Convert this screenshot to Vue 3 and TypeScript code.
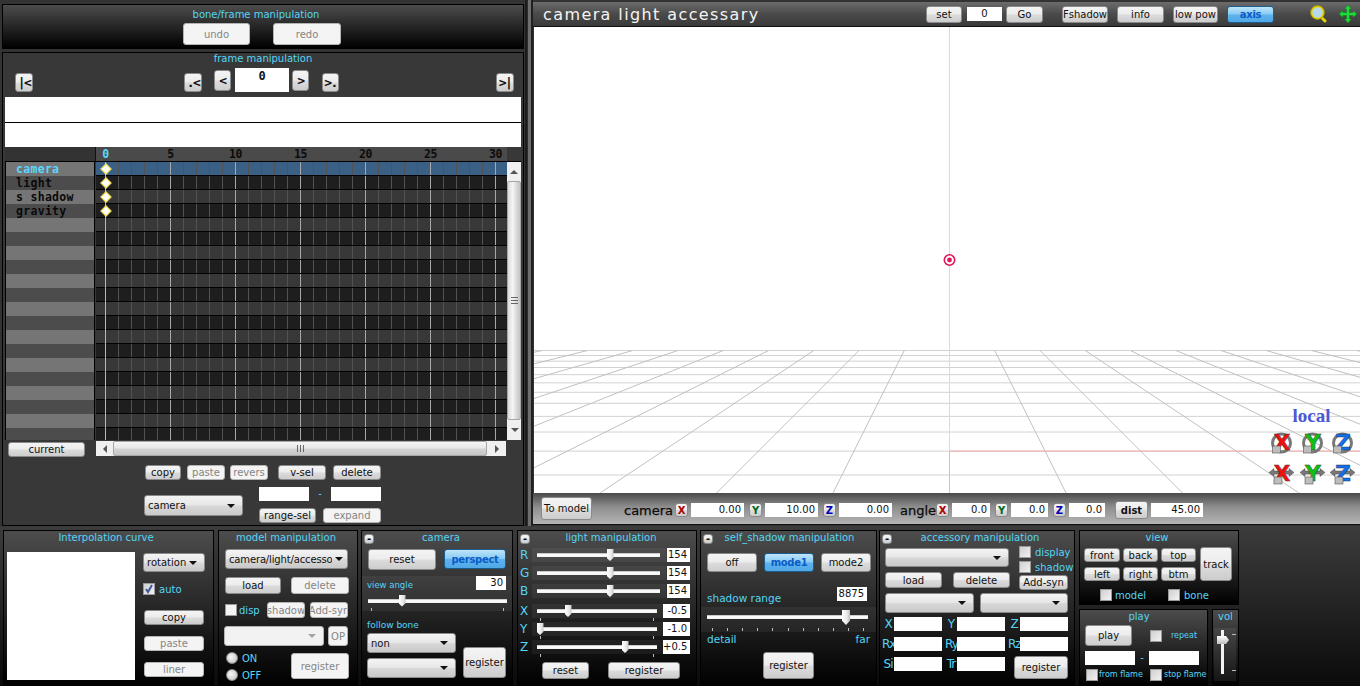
<script setup lang="ts">
const rowCount = 20
const rows = Array.from({ length: rowCount }, (_, i) => i)
const labels = ['camera', 'light', 's shadow', 'gravity']
const headNums = [0, 5, 10, 15, 20, 25, 30]

const f = 860
const cx = 415.5
const cy = 233
const horizon = [-5, 0, 5, 10, 15, 20, 25, 30, 35, 40, 45, 50].map((z) => cy + (f * 10) / (z + 45))
const depth = Array.from({ length: 21 }, (_, i) => -50 + i * 5)
  .filter((x) => x !== 0)
  .map((x) => ({
    x1: cx + (f * x) / 95,
    y1: cy + (f * 10) / 95,
    x2: cx + (f * x) / 20,
    y2: cy + (f * 10) / 20,
  }))
const floorY = cy + (f * 10) / 45

interface Axis { letter: string; color: string }
const axes: Axis[] = [
  { letter: 'X', color: '#f01010' },
  { letter: 'Y', color: '#10c010' },
  { letter: 'Z', color: '#1070f0' },
]

interface LightRow { id: string; value: string; thumb: number }
const lightTop: LightRow[] = [
  { id: 'R', value: '154', thumb: 73 },
  { id: 'G', value: '154', thumb: 73 },
  { id: 'B', value: '154', thumb: 73 },
]
const lightBottom: LightRow[] = [
  { id: 'X', value: '-0.5', thumb: 31 },
  { id: 'Y', value: '-1.0', thumb: 3 },
  { id: 'Z', value: '+0.5', thumb: 88 },
]
const shadowTicks = Array.from({ length: 11 }, (_, i) => 5 + i * 15.1)
const accRows = [
  ['X', 'Y', 'Z'],
  ['Rx', 'Ry', 'Rz'],
]
const camValues = [
  { axis: 'X', cls: 'ax-x', w: 'w53', v: '0.00' },
  { axis: 'Y', cls: 'ax-y', w: 'w53', v: '10.00' },
  { axis: 'Z', cls: 'ax-z', w: 'w53', v: '0.00' },
]
const angleValues = [
  { axis: 'X', cls: 'ax-x', w: 'w38', v: '0.0' },
  { axis: 'Y', cls: 'ax-y', w: 'w37', v: '0.0' },
  { axis: 'Z', cls: 'ax-z', w: 'w36', v: '0.0' },
]
function px(n: number): string {
  return n + 'px'
}
</script>

<template>
  <div class="app">
    <div class="top">
      <div class="left">
        <section class="panel grad p-undo">
          <div class="title pt3 pr14">bone/frame manipulation</div>
          <div class="r center g23 mt1 pr2">
            <div class="btn dis w67 h22">undo</div>
            <div class="btn dis w68 h22">redo</div>
          </div>
        </section>
        <section class="panel flat p-frame">
          <div class="title h11">frame manipulation</div>
          <div class="r mt4 h24">
            <div class="btn nav ml12 mt5 w18 h19">|&lt;</div>
            <div class="btn nav ml151 mt5 w18 h19">.&lt;</div>
            <div class="btn nav ml12 mt2 w17 h21">&lt;</div>
            <div class="field frame-no ml4 w54 h24">0</div>
            <div class="btn nav ml3 mt2 w17 h21">&gt;</div>
            <div class="btn nav ml13 mt5 w17 h19">&gt;.</div>
            <div class="btn nav ml157 mt5 w18 h19">&gt;|</div>
          </div>
          <div class="strips ml2 mt5">
            <div class="strip h25"></div>
            <div class="strip h24"></div>
          </div>
          <div class="timeline ml2">
            <div class="tl-head">
              <div class="tl-corner"></div>
              <div class="tl-nums">
                <span v-for="n in headNums" :key="n" class="tl-num" :class="{ cur: n === 0 }">{{ n }}</span>
              </div>
              <div class="tl-end"></div>
            </div>
            <div class="tl-body">
              <div class="tl-labels">
                <div v-for="i in rows" :key="i" class="tl-label" :class="{ odd: i % 2 === 0, cur: i === 0 }">{{ labels[i] }}</div>
              </div>
              <div class="tl-grid">
                <div v-for="i in rows" :key="i" class="tl-row" :class="{ even: i % 2 === 1, sel: i === 0 }">
                  <i v-if="i < 4" class="key"></i>
                </div>
                <div class="playhead"></div>
              </div>
              <div class="vscroll">
                <div class="sb-arrow"><i class="tri up"></i></div>
                <div class="vthumb"><i class="grip-v"></i></div>
                <div class="sb-arrow grow"><i class="tri down small"></i></div>
              </div>
            </div>
            <div class="tl-foot">
              <div class="btn w77 h15 ml3 mt2">current</div>
              <div class="hscroll ml11 mt1">
                <div class="sb-arrow hz w17"><i class="tri t-l"></i></div>
                <div class="hthumb"><i class="grip-h"></i></div>
                <div class="sb-arrow hz grow"><i class="tri t-r"></i></div>
              </div>
            </div>
          </div>
          <div class="r mt8 ml142">
            <div class="btn w36 h15">copy</div>
            <div class="btn dis ml6 w38 h15">paste</div>
            <div class="btn dis ml5 w38 h15">revers</div>
            <div class="btn ml10 w48 h15">v-sel</div>
            <div class="btn ml7 w48 h15">delete</div>
          </div>
          <div class="r mt7 ml141">
            <div class="select mt8 w99 h21"><span>camera</span><i class="tri down"></i></div>
            <div class="ml16">
              <div class="r">
                <div class="field w50 h14"></div>
                <div class="dash w22">-</div>
                <div class="field w50 h14"></div>
              </div>
              <div class="r mt7">
                <div class="btn w57 h15">range-sel</div>
                <div class="btn dis ml7 w58 h15">expand</div>
              </div>
            </div>
          </div>
        </section>
      </div>

      <div class="divider"></div>

      <div class="right">
        <div class="head">
          <div class="head-title">camera light accessary</div>
          <div class="btn w36 h17">set</div>
          <div class="field ctr ml5 w35 h14">0</div>
          <div class="btn ml4 w37 h17">Go</div>
          <div class="btn ml19 w46 h17">Fshadow</div>
          <div class="btn ml9 w47 h17">info</div>
          <div class="btn ml9 w45 h17">low pow</div>
          <div class="btn act ml9 w47 h17">axis</div>
          <svg class="ml36" width="17" height="18" viewBox="0 0 17 18">
            <path d="M11 12l4 4" stroke="#e8d400" stroke-width="3" stroke-linecap="round" />
            <circle cx="7.5" cy="7.5" r="6.2" fill="#b5d8ee" stroke="#e8d400" stroke-width="2" />
            <circle cx="7.5" cy="7.5" r="6.9" fill="none" stroke="#6a6200" stroke-width=".5" />
          </svg>
          <svg class="ml12" width="18" height="18" viewBox="0 0 18 18">
            <path d="M9 0l3.5 4H10.5v3.5H14V5.500L18 9l-4 3.500v-2H10.500V14h2L9 18l-3.500-4h2v-3.500H4v2L0 9l4-3.500v2h3.500V4h-2z" fill="#22d83a" stroke="#0a7a1a" stroke-width=".5" />
          </svg>
        </div>
        <div class="viewport">
          <svg class="scene" width="826" height="466" viewBox="0 0 826 466">
            <line v-for="(y, i) in horizon" :key="'h' + i" x1="0" :y1="y" x2="826" :y2="y" stroke="#d2d2d2" stroke-width="1" />
            <line v-for="(d, i) in depth" :key="'d' + i" :x1="d.x1" :y1="d.y1" :x2="d.x2" :y2="d.y2" stroke="#c0c0c0" stroke-width="1" />
            <line :x1="cx" y1="0" :x2="cx" :y2="floorY" stroke="#c6e8c6" />
            <line :x1="cx" :y1="floorY" x2="826" :y2="floorY" stroke="#f2aaaa" />
            <line :x1="cx" :y1="floorY" :x2="cx" y2="466" stroke="#c0c0f4" />
            <circle :cx="cx" :cy="cy" r="5.2" fill="#fff" stroke="#e0185c" stroke-width="1.6" />
            <circle :cx="cx" :cy="cy" r="2.4" fill="#e0185c" />
          </svg>
          <div class="gizmo">
            <div class="local">local</div>
            <div class="giz-grid">
              <svg v-for="a in axes" :key="'r' + a.letter" width="25" height="27" viewBox="0 -4 25 27">
                <circle cx="12.5" cy="10" r="9" fill="none" stroke="#787878" stroke-width="3" />
                <text x="13" y="17" text-anchor="middle" class="giz-text" :fill="a.color" stroke="#333" stroke-width=".4">{{ a.letter }}</text>
                <rect x="3.5" y="13" width="8" height="7" fill="#bdbdbd" stroke="#555" stroke-width=".6" />
              </svg>
            </div>
            <div class="giz-grid lower">
              <svg v-for="a in axes" :key="'m' + a.letter" width="25" height="27" viewBox="0 -4 25 27">
                <path d="M0 8.500l5-4v2.500h15V4.500l5 4-5 4V10H5v2.500z" fill="#787878" stroke="#333" stroke-width=".4" />
                <text x="13" y="17" text-anchor="middle" class="giz-text" :fill="a.color" stroke="#333" stroke-width=".4">{{ a.letter }}</text>
                <rect x="5" y="13" width="8" height="7" fill="#bdbdbd" stroke="#555" stroke-width=".6" />
              </svg>
            </div>
          </div>
        </div>
        <div class="cambar">
          <div class="btn tomodel ml8 w51 h23">To model</div>
          <span class="barlabel cam">camera</span>
          <template v-for="c in camValues" :key="c.axis">
            <div class="btn axbtn w13 h14" :class="c.cls">{{ c.axis }}</div>
            <div class="field num ml3 mr5 h14" :class="c.w">{{ c.v }}</div>
          </template>
          <span class="barlabel ang">angle</span>
          <template v-for="c in angleValues" :key="'a' + c.axis">
            <div class="btn axbtn w13 h14" :class="c.cls">{{ c.axis }}</div>
            <div class="field num ml3 mr5 h14" :class="c.w">{{ c.v }}</div>
          </template>
          <div class="btn distbtn ml5 w33 h18">dist</div>
          <div class="field num ml3 w52 h14">45.00</div>
        </div>
      </div>
    </div>

    <div class="bottom">
      <section class="panel grad p-ic">
        <div class="title pr5">Interpolation curve</div>
        <div class="r">
          <div class="curve"></div>
          <div class="ml8 mt8">
            <div class="select w62 h19"><span>rotation</span><i class="tri down"></i></div>
            <div class="r ac mt11 h12"><i class="check on"><svg width="10" height="10" viewBox="0 0 10 10"><path d="M2 5l2 3 4-7" fill="none" stroke="#3c5a9c" stroke-width="2" /></svg></i><span class="lab ml4">auto</span></div>
            <div class="btn ml1 mt15 w60 h15">copy</div>
            <div class="btn dis ml1 mt11 w60 h15">paste</div>
            <div class="btn dis ml1 mt11 w60 h15">liner</div>
          </div>
        </div>
      </section>

      <section class="panel grad p-model gapl4">
        <div class="title pr4">model manipulation</div>
        <div class="select ml6 mt4 w123 h20 tight"><span>camera/light/accesso</span><i class="tri down"></i></div>
        <div class="r mt8 ml6">
          <div class="btn w56 h17">load</div>
          <div class="btn dis ml10 w58 h17">delete</div>
        </div>
        <div class="r ac mt8 ml6 h16">
          <i class="check white"></i><span class="lab ml2 w28">disp</span>
          <div class="btn dis w38 h16">shadow</div>
          <div class="btn dis ml5 w38 h16">Add-syn</div>
        </div>
        <div class="r mt8 ml5">
          <div class="select sel-dis w100 h20"><span></span><i class="tri down pale"></i></div>
          <div class="btn dis ml4 w20 h20">OP</div>
        </div>
        <div class="r ml7">
          <div class="w65 mt6">
            <div class="r ac h12"><i class="radio"></i><span class="lab ml4">ON</span></div>
            <div class="r ac h12 mt5"><i class="radio"></i><span class="lab ml4">OFF</span></div>
          </div>
          <div class="btn dis mt7 w58 h26">register</div>
        </div>
      </section>

      <section class="panel grad p-cam gapl3">
        <div class="title has-min pl8"><div class="btn mini">-</div>camera</div>
        <div class="r mt4 ml6">
          <div class="btn w68 h21">reset</div>
          <div class="btn act ml8 w62 h20">perspect</div>
        </div>
        <div class="band mt6">
          <div class="r ac ml5 h14">
            <span class="lab small-lab mt4 w109">view angle</span>
            <div class="field num w30 h14">30</div>
          </div>
          <div class="slider ml6 w139 h21">
            <i class="track"></i>
            <i class="thumb" :style="{ left: px(34) }"></i>
            <i class="tick tk3"></i>
            <i class="tick tk135"></i>
          </div>
        </div>
        <div class="r ml5 mt6">
          <div>
            <div class="lab follow h14">follow bone</div>
            <div class="select mt2 w89 h20"><span>non</span><i class="tri down"></i></div>
            <div class="select mt5 w89 h20"><span></span><i class="tri down"></i></div>
          </div>
          <div class="btn ml7 mt30 w43 h31">register</div>
        </div>
      </section>

      <section class="panel grad p-light gapl4">
        <div class="title has-min pl8"><div class="btn mini">-</div>light manipulation</div>
        <div class="lt-top">
          <div v-for="l in lightTop" :key="l.id" class="lt-row">
            <span class="lt-id">{{ l.id }}</span>
            <div class="slider ml4 w123 h14"><i class="track"></i><i class="thumb" :style="{ left: px(l.thumb) }"></i></div>
            <div class="field num ml7 w23 h14">{{ l.value }}</div>
          </div>
        </div>
        <div class="lt-bot">
          <div v-for="l in lightBottom" :key="l.id" class="lt-row">
            <span class="lt-id">{{ l.id }}</span>
            <div class="slider ml4 w120 h14">
              <i class="track"></i><i class="thumb" :style="{ left: px(l.thumb) }"></i>
              <i class="tick tk3"></i><i class="tick tk116"></i>
            </div>
            <div class="field num ml6 w27 h14">{{ l.value }}</div>
          </div>
        </div>
        <div class="r mt8 ml24">
          <div class="btn w47 h17">reset</div>
          <div class="btn ml19 w72 h17">register</div>
        </div>
      </section>

      <section class="panel grad p-shadow gapl3">
        <div class="title has-min pl2"><div class="btn mini">-</div>self_shadow manipulation</div>
        <div class="r mt8 ml6">
          <div class="btn w50 h19">off</div>
          <div class="btn act ml7 w50 h19">mode1</div>
          <div class="btn ml7 w50 h19">mode2</div>
        </div>
        <div class="r ac mt15 ml6 h14">
          <span class="lab big mt8 w130">shadow range</span>
          <div class="field num w30 h14">8875</div>
        </div>
        <div class="band band-sh mt6">
          <div class="slider ml6 w161 h20">
            <i class="track"></i>
            <i class="thumb lg" :style="{ left: px(139) }"></i>
            <i v-for="(t, i) in shadowTicks" :key="i" class="tick tick-sh" :style="{ left: px(t) }"></i>
          </div>
        </div>
        <div class="r ac between ml6 mr6 h14">
          <span class="lab big">detail</span><span class="lab big">far</span>
        </div>
        <div class="btn ml62 mt6 w51 h27">register</div>
      </section>

      <section class="panel grad p-acc gapl2">
        <div class="title has-min pl6"><div class="btn mini">-</div>accessory manipulation</div>
        <div class="r">
          <div class="ml5 mt3">
            <div class="select w124 h19"><span></span><i class="tri down"></i></div>
            <div class="r mt5">
              <div class="btn w57 h16">load</div>
              <div class="btn ml11 w57 h16">delete</div>
            </div>
          </div>
          <div class="ml9 mt1">
            <div class="r ac h12"><i class="check"></i><span class="lab ml4">display</span></div>
            <div class="r ac h12 mt3"><i class="check"></i><span class="lab ml4">shadow</span></div>
            <div class="btn mt2 w49 h15">Add-syn</div>
          </div>
        </div>
        <div class="r mt3 ml5">
          <div class="select w89 h20"><span></span><i class="tri down"></i></div>
          <div class="select ml6 w88 h20"><span></span><i class="tri down"></i></div>
        </div>
        <div v-for="(row, i) in accRows" :key="i" class="r ac h14 ml2" :class="i === 0 ? 'mt4' : 'mt6'">
          <template v-for="(c, j) in row" :key="c">
            <span class="acc-id" :class="{ ml3: j > 0 }">{{ c }}</span>
            <div class="field w48 h14"></div>
          </template>
        </div>
        <div class="r ml2 mt6 h14">
          <span class="acc-id">Si</span>
          <div class="field w48 h14"></div>
          <span class="acc-id ml3">Tr</span>
          <div class="field w48 h14"></div>
          <div class="btn reg-acc ml9 w54 h23">register</div>
        </div>
      </section>

      <div class="stack gapl4">
        <section class="panel grad p-view">
          <div class="title pr4">view</div>
          <div class="r ml4">
            <div class="mt3">
              <div class="r g3">
                <div class="btn w36 h14">front</div>
                <div class="btn w35 h14">back</div>
                <div class="btn w35 h14">top</div>
              </div>
              <div class="r g3 mt5">
                <div class="btn w36 h14">left</div>
                <div class="btn w35 h14">right</div>
                <div class="btn w35 h14">btm</div>
              </div>
            </div>
            <div class="btn ml4 mt2 w32 h34">track</div>
          </div>
          <div class="r ac ml20 mt8 h12">
            <div class="r ac w68"><i class="check"></i><span class="lab ml3">model</span></div>
            <div class="r ac"><i class="check"></i><span class="lab ml4">bone</span></div>
          </div>
        </section>
        <div class="r mt4">
          <section class="panel grad p-play">
            <div class="title pr9">play</div>
            <div class="r ml5 mt1">
              <div class="btn w47 h21">play</div>
              <div class="r ac ml18 h21"><i class="check"></i><span class="lab tiny ml9">repeat</span></div>
            </div>
            <div class="r ml5 mt5">
              <div class="field w50 h14"></div>
              <div class="dash w14">-</div>
              <div class="field w50 h14"></div>
            </div>
            <div class="r ac ml6 mt3 h13">
              <div class="r ac w64"><i class="check"></i><span class="lab tiny ml1">from flame</span></div>
              <div class="r ac"><i class="check"></i><span class="lab tiny ml2">stop flame</span></div>
            </div>
          </section>
          <section class="panel grad p-vol ml4">
            <div class="title">vol</div>
            <div class="vol-band">
              <i class="vol-track"></i>
              <i class="vol-thumb"></i>
              <i class="vol-tick t1"></i>
              <i class="vol-tick t2"></i>
            </div>
          </section>
        </div>
      </div>
    </div>
  </div>
</template>

<style>
html, body { margin: 0; padding: 0; background: #222; overflow: hidden; }
</style>

<style scoped>
.app { width: 1360px; height: 686px; display: flex; flex-direction: column; overflow: hidden; font-family: "DejaVu Sans", sans-serif; font-size: 10px; color: #111; background: #333; }
.top { height: 526px; display: flex; }
.left { width: 525px; padding: 4px 1px 0 2px; box-sizing: border-box; }
.divider { width: 8px; background: linear-gradient(90deg, #1c1c1c 0 2px, #2c2c2c 2px 3px, #6e6e6e 3px 6px, #202020 6px 8px); }
.right { width: 827px; display: flex; flex-direction: column; background: #333; }

.panel { box-sizing: border-box; border: 1px solid #000; overflow: hidden; }
.grad { background: linear-gradient(#4c4c4c, #000); }
.flat { background: #383838; }
.p-undo { height: 45px; }
.p-frame { height: 474px; margin-top: 3px; }

.title { color: #55d5f6; text-align: center; height: 14px; line-height: 14px; position: relative; white-space: nowrap; box-sizing: content-box; }
.title.h11 { height: 11px; line-height: 11px; }
.pt3 { padding-top: 3px; }
.pl2 { padding-left: 2px; }
.pl6 { padding-left: 6px; }
.pl8 { padding-left: 8px; }
.pr2 { padding-right: 2px; }
.pr4 { padding-right: 4px; }
.pr5 { padding-right: 5px; }
.pr9 { padding-right: 9px; }
.pr14 { padding-right: 14px; }
.mini { position: absolute; left: 2px; top: 3px; width: 10px; height: 10px; font-weight: bold; line-height: 8px; }

.r { display: flex; align-items: flex-start; }
.ac { align-items: center; }
.center { justify-content: center; }
.between { justify-content: space-between; }
.g3 { gap: 3px; }
.g23 { gap: 23px; }

.btn { box-sizing: border-box; display: flex; align-items: center; justify-content: center; flex: none; overflow: hidden; white-space: nowrap; border: 1px solid #8a8a8a; border-radius: 3px; color: #111; background: linear-gradient(#f4f4f4, #ececec 48%, #dcdcdc 52%, #cdcdcd); }
.dis { background: #f4f4f4; color: #858585; border-color: #b4b4b4; }
.act { background: linear-gradient(#bfe4f9, #86cbf3 48%, #5fb3ec 52%, #4fa8e6); border-color: #1c5d8c; color: #0b5bc8; font-weight: bold; letter-spacing: -.3px; }
.nav { font-weight: bold; font-size: 13px; color: #111; font-family: "DejaVu Sans Mono", monospace; letter-spacing: -1.5px; }
.tomodel { margin-top: -3px; }
.axbtn { font-weight: bold; }
.ax-x { color: #b00000; }
.ax-y { color: #006a1e; }
.ax-z { color: #0000b4; }
.distbtn { font-weight: bold; }
.reg-acc { margin-top: -1px; }

.field { box-sizing: border-box; background: #fff; flex: none; color: #111; line-height: 14px; white-space: nowrap; overflow: hidden; }
.ctr { text-align: center; }
.num { text-align: right; padding-right: 3px; }
.frame-no { text-align: center; font-weight: bold; font-size: 12px; line-height: 17px; font-family: "DejaVu Sans Mono", monospace; }
.dash { text-align: center; color: #55d5f6; line-height: 14px; flex: none; }

.select { box-sizing: border-box; flex: none; display: flex; align-items: center; justify-content: space-between; padding: 0 7px 0 3px; border: 1px solid #8a8a8a; border-radius: 3px; background: linear-gradient(#f4f4f4, #e6e6e6 48%, #d8d8d8 52%, #c9c9c9); white-space: nowrap; overflow: hidden; }
.select span { overflow: hidden; }
.tight { padding-right: 4px; }
.tight span { letter-spacing: -.15px; }
.sel-dis { background: #f2f2f2; border-color: #b4b4b4; }

.tri { display: block; width: 0; height: 0; flex: none; }
.tri.down { border-left: 4px solid transparent; border-right: 4px solid transparent; border-top: 4px solid #111; margin-left: 2px; }
.tri.down.small { border-top-color: #555; }
.tri.down.pale { border-top-color: #a4a4a4; }
.tri.up { border-left: 4px solid transparent; border-right: 4px solid transparent; border-bottom: 4px solid #555; }
.tri.t-l { border-top: 4px solid transparent; border-bottom: 4px solid transparent; border-right: 4px solid #555; }
.tri.t-r { border-top: 4px solid transparent; border-bottom: 4px solid transparent; border-left: 4px solid #555; }

.strips { width: 516px; }
.strip { background: #fff; }
.strip.h25 { border-bottom: 1px solid #000; box-sizing: content-box; }

.timeline { width: 516px; }
.tl-head { display: flex; height: 15px; box-sizing: border-box; border-bottom: 1px solid #000; }
.tl-corner { width: 90px; background: #333; }
.tl-nums { width: 412px; background: #4a4a4a; border-left: 1px solid #111; box-sizing: border-box; display: flex; gap: 52px; padding-left: 3px; overflow: hidden; }
.tl-num { flex: none; width: 13px; text-align: center; font: bold 11.5px/14px "DejaVu Sans Mono", monospace; color: #0c0c0c; letter-spacing: -.5px; white-space: nowrap; }
.tl-num.cur { color: #5ad8ff; }
.tl-end { flex: 1; background: #383838; }
.tl-body { display: flex; height: 278px; overflow: hidden; }
.tl-labels { width: 90px; padding-left: 1px; box-sizing: border-box; background: #000; border-right: 1px solid #000; }
.tl-label { height: 14px; background: #4c4c4c; padding-left: 10px; font: bold 11.5px/14px "DejaVu Sans Mono", monospace; color: #0a0a0a; white-space: nowrap; letter-spacing: .3px; }
.tl-label.odd { background: #757575; }
.tl-label.cur { color: #5ad8ff; }
.tl-grid { width: 411px; margin-left: 1px; position: relative; overflow: hidden; }
.tl-row { height: 14px; box-sizing: border-box; border-bottom: 1px solid #000; display: flex; align-items: center; background-color: #383838; background-image: repeating-linear-gradient(90deg, transparent 0 9px, #a8a8a8 9px 10px, transparent 10px 65px), repeating-linear-gradient(90deg, transparent 0 9px, #525252 9px 10px, transparent 10px 13px); }
.tl-row.even { background-color: #1e1e1e; }
.tl-row.sel { background-color: #3b6085; }
.key { position: relative; z-index: 2; box-sizing: border-box; display: block; width: 8px; height: 8px; margin-left: 5.5px; background: #fff; border: 1px solid #ecd93a; transform: rotate(45deg); }
.playhead { position: absolute; left: 9px; top: 0; bottom: 0; width: 1px; background: #5ad8ff; }
.vscroll { width: 14px; background: #f0f0f0; display: flex; flex-direction: column; }
.sb-arrow { height: 19px; display: flex; align-items: center; justify-content: center; flex: none; }
.sb-arrow.grow { flex: 1; }
.sb-arrow.hz { height: 100%; }
.vthumb { height: 239px; box-sizing: border-box; flex: none; border: 1px solid #a6a6a6; border-radius: 2px; background: linear-gradient(90deg, #dadada, #f6f6f6 40%, #e2e2e2 60%, #c4c4c4); display: flex; align-items: center; justify-content: center; }
.grip-v { width: 7px; height: 7px; background: repeating-linear-gradient(#666 0 1px, transparent 1px 3px); }
.tl-foot { display: flex; height: 17px; }
.hscroll { width: 410px; height: 15px; display: flex; background: #f0f0f0; }
.hthumb { width: 374px; box-sizing: border-box; border: 1px solid #a6a6a6; border-radius: 2px; background: linear-gradient(#f6f6f6, #e6e6e6 48%, #d4d4d4 52%, #c6c6c6); display: flex; align-items: center; justify-content: center; }
.grip-h { width: 7px; height: 7px; background: repeating-linear-gradient(90deg, #666 0 1px, transparent 1px 3px); }

.head { height: 24px; margin-top: 2px; border-bottom: 1px solid #111; display: flex; align-items: center; background: linear-gradient(#6c6c6c, #4a4a4a 50%, #3a3a3a); }
.head-title { flex: none; width: 383px; padding-left: 10px; color: #f4f4f4; font-size: 16px; letter-spacing: 1.4px; white-space: nowrap; }
.viewport { position: relative; height: 466px; margin-left: 1px; background: #fff; overflow: hidden; }
.scene { display: block; }
.gizmo { position: absolute; left: 735px; top: 379px; width: 86px; }
.local { text-align: center; color: #4b58d8; margin-left: -1px; font: bold 19px/20px "Liberation Serif", serif; }
.giz-grid { display: flex; gap: 5.5px; margin-top: 3px; }
.giz-grid.lower { margin-top: 4px; }
.giz-text { font: bold 22px "DejaVu Sans", sans-serif; }
.cambar { height: 32px; padding-top: 3px; box-sizing: border-box; display: flex; align-items: center; border-bottom: 1px solid #111; background: linear-gradient(#4a4a4a, #8e8e8e 45%, #b4b4b4); }
.barlabel { font-size: 13px; color: #0a0a0a; -webkit-text-stroke: .25px #0a0a0a; white-space: nowrap; flex: none; }
.barlabel.cam { margin-left: 32px; width: 51px; }
.barlabel.ang { margin-left: 3px; width: 36px; }

.bottom { height: 160px; padding: 4px 0 0 3px; box-sizing: border-box; display: flex; background: linear-gradient(#3c3c3c, #0a0a0a); overflow: hidden; }
.bottom .panel { flex: none; }
.p-ic { width: 211px; height: 156px; }
.p-model { width: 140px; height: 156px; }
.p-cam { width: 152px; height: 156px; }
.p-light { width: 180px; height: 156px; }
.p-shadow { width: 177px; height: 156px; }
.p-acc { width: 196px; height: 156px; }
.gapl4 { margin-left: 4px; }
.gapl3 { margin-left: 3px; }
.gapl2 { margin-left: 2px; }
.stack { width: 160px; flex: none; }
.p-view { height: 75px; }
.p-play { width: 129px; height: 77px; }
.p-vol { width: 27px; height: 77px; }
.curve { width: 128px; height: 128px; margin: 7px 0 0 3px; background: #fff; flex: none; }

.lab { color: #55d5f6; white-space: nowrap; flex: none; }
.lab.big { font-size: 10.5px; }
.lab.tiny { font-size: 8px; }
.lab.small-lab { font-size: 8.5px; }
.lab.follow { font-size: 9px; line-height: 17px; }
.check { box-sizing: border-box; display: flex; align-items: center; justify-content: center; flex: none; width: 12px; height: 12px; border: 1px solid #9a9a9a; background: linear-gradient(135deg, #cfcfcf, #f2f2f2); }
.check.white { background: #f4f4f4; }
.radio { display: block; flex: none; width: 12px; height: 12px; border-radius: 50%; border: 1px solid #8a8a8a; box-sizing: border-box; background: radial-gradient(circle at 40% 40%, #f6f6f6, #bcbcbc); }
.band { background: rgba(255, 255, 255, .05); }
.band-sh { height: 25px; }

.slider { position: relative; flex: none; box-sizing: border-box; }
.track { position: absolute; left: 0; right: 0; top: 50%; height: 4px; margin-top: -2px; background: linear-gradient(#b4b4b4, #fff 40%, #f2f2f2); }
.thumb { position: absolute; top: 50%; width: 7px; height: 12px; margin-top: -6px; margin-left: -3.5px; background: linear-gradient(90deg, #fff, #e8e8e8 60%, #bdbdbd); clip-path: polygon(0 0, 100% 0, 100% 72%, 50% 100%, 0 72%); }
.thumb.lg { width: 8px; height: 15px; margin-top: -7px; margin-left: -4px; }
.tick { position: absolute; top: calc(50% + 7px); width: 1px; height: 3px; background: #bbb; }
.tick-sh { top: calc(50% + 11px); }
.tk3 { left: 3px; }
.tk116 { left: 116px; }
.tk135 { left: 135px; }

.lt-top { width: 172px; margin-top: 3px; display: flex; flex-direction: column; gap: 4px; }
.lt-bot { width: 172px; margin-top: 6px; display: flex; flex-direction: column; gap: 4px; }
.lt-row { display: flex; align-items: center; height: 14px; background: linear-gradient(90deg, transparent 14px, rgba(255, 255, 255, .05) 14px 148px, transparent 148px); }
.lt-id { width: 15px; padding-left: 2px; box-sizing: border-box; font-size: 12px; color: #55d5f6; flex: none; }
.acc-id { width: 12px; flex: none; text-align: center; font-size: 12px; color: #55d5f6; letter-spacing: -1px; white-space: nowrap; line-height: 14px; }

.vol-band { position: relative; width: 22px; height: 53px; margin: 4px 0 0 1px; background: rgba(255, 255, 255, .07); }
.vol-track { position: absolute; left: 7px; top: 2px; width: 3px; height: 44px; background: #f2f2f2; }
.vol-thumb { position: absolute; left: 3px; top: 8px; width: 12px; height: 8px; background: linear-gradient(#fff, #bdbdbd); clip-path: polygon(0 0, 75% 0, 100% 50%, 75% 100%, 0 100%); }
.vol-tick { position: absolute; left: 18px; width: 4px; height: 1px; background: #bbb; }
.t1 { top: 6px; }
.t2 { top: 42px; }

.w13 { width: 13px; } .w14 { width: 14px; } .w17 { width: 17px; } .w18 { width: 18px; } .w20 { width: 20px; } .w22 { width: 22px; } .w23 { width: 23px; } .w27 { width: 27px; } .w28 { width: 28px; } .w30 { width: 30px; } .w32 { width: 32px; } .w33 { width: 33px; } .w35 { width: 35px; } .w36 { width: 36px; } .w37 { width: 37px; } .w38 { width: 38px; } .w43 { width: 43px; } .w45 { width: 45px; } .w46 { width: 46px; } .w47 { width: 47px; } .w48 { width: 48px; } .w49 { width: 49px; } .w50 { width: 50px; } .w51 { width: 51px; } .w52 { width: 52px; } .w53 { width: 53px; } .w54 { width: 54px; } .w56 { width: 56px; } .w57 { width: 57px; } .w58 { width: 58px; } .w60 { width: 60px; } .w62 { width: 62px; } .w64 { width: 64px; } .w65 { width: 65px; } .w67 { width: 67px; } .w68 { width: 68px; } .w72 { width: 72px; } .w77 { width: 77px; } .w88 { width: 88px; } .w89 { width: 89px; } .w99 { width: 99px; } .w100 { width: 100px; } .w109 { width: 109px; } .w120 { width: 120px; } .w123 { width: 123px; } .w124 { width: 124px; } .w130 { width: 130px; } .w139 { width: 139px; } .w161 { width: 161px; }
.h12 { height: 12px; } .h13 { height: 13px; } .h14 { height: 14px; } .h15 { height: 15px; } .h16 { height: 16px; } .h17 { height: 17px; } .h18 { height: 18px; } .h19 { height: 19px; } .h20 { height: 20px; } .h21 { height: 21px; } .h22 { height: 22px; } .h23 { height: 23px; } .h24 { height: 24px; } .h25 { height: 25px; } .h26 { height: 26px; } .h27 { height: 27px; } .h31 { height: 31px; } .h34 { height: 34px; }
.ml1 { margin-left: 1px; } .ml2 { margin-left: 2px; } .ml3 { margin-left: 3px; } .ml4 { margin-left: 4px; } .ml5 { margin-left: 5px; } .ml6 { margin-left: 6px; } .ml7 { margin-left: 7px; } .ml8 { margin-left: 8px; } .ml9 { margin-left: 9px; } .ml10 { margin-left: 10px; } .ml11 { margin-left: 11px; } .ml12 { margin-left: 12px; } .ml13 { margin-left: 13px; } .ml16 { margin-left: 16px; } .ml18 { margin-left: 18px; } .ml19 { margin-left: 19px; } .ml20 { margin-left: 20px; } .ml24 { margin-left: 24px; } .ml36 { margin-left: 36px; } .ml62 { margin-left: 62px; } .ml141 { margin-left: 141px; } .ml142 { margin-left: 142px; } .ml151 { margin-left: 151px; } .ml157 { margin-left: 157px; }
.mr5 { margin-right: 5px; } .mr6 { margin-right: 6px; }
.mt1 { margin-top: 1px; } .mt2 { margin-top: 2px; } .mt3 { margin-top: 3px; } .mt4 { margin-top: 4px; } .mt5 { margin-top: 5px; } .mt6 { margin-top: 6px; } .mt7 { margin-top: 7px; } .mt8 { margin-top: 8px; } .mt9 { margin-top: 9px; } .mt10 { margin-top: 10px; } .mt11 { margin-top: 11px; } .mt15 { margin-top: 15px; } .mt30 { margin-top: 30px; }
</style>
